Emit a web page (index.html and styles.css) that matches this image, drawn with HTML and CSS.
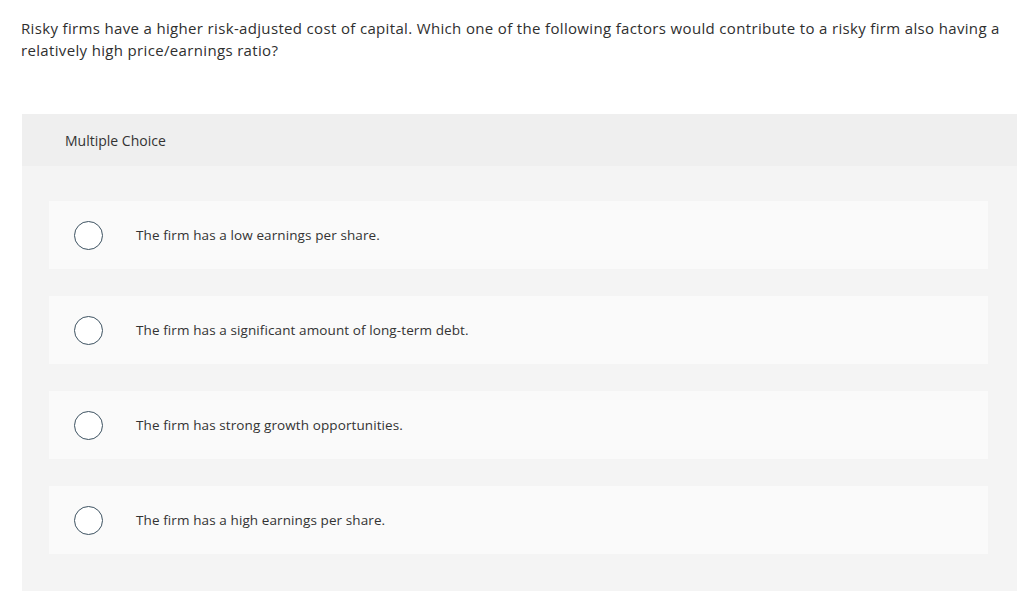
FILE: index.html
```html
<!DOCTYPE html>
<html lang="en">
<head>
<meta charset="utf-8">
<title>Multiple Choice</title>
<link rel="stylesheet" href="styles.css">
</head>
<body>
<div class="page">
  <p class="question">Risky firms have a higher risk-adjusted cost of capital. Which one of the following factors would contribute to a risky firm also having a relatively high price/earnings ratio?</p>
  <section class="panel">
    <div class="panel-head">Multiple Choice</div>
    <div class="panel-body">
      <label class="option"><span class="radio"></span><span class="opt-text">The firm has a low earnings per share.</span></label>
      <label class="option"><span class="radio"></span><span class="opt-text">The firm has a significant amount of long-term debt.</span></label>
      <label class="option"><span class="radio"></span><span class="opt-text">The firm has strong growth opportunities.</span></label>
      <label class="option"><span class="radio"></span><span class="opt-text">The firm has a high earnings per share.</span></label>
    </div>
  </section>
</div>
</body>
</html>
```
FILE: styles.css
```css
html, body {
  margin: 0;
  padding: 0;
  background: #ffffff;
}
body {
  font-family: "Open Sans", Lato, "Liberation Sans", sans-serif;
  color: #333333;
  font-variant-ligatures: none;
}
.page {
  padding: 17px 7px 0 21px;
}
.question {
  margin: 0;
  font-size: 15px;
  letter-spacing: 0.34px;
  line-height: 22px;
  color: #2f2f2f;
}
.panel {
  margin-top: 53px;
  margin-left: 1px;
}
.panel-head {
  height: 52px;
  background: #efefef;
  display: flex;
  align-items: center;
  padding-left: 43px;
  font-size: 14px;
  color: #333;
}
.panel-body {
  background: #f4f4f4;
  padding: 35px 29px 40px 27px;
  display: flex;
  flex-direction: column;
  gap: 27px;
}
.option {
  height: 68px;
  background: #fafafa;
  display: flex;
  align-items: center;
  padding-left: 25px;
}
.radio {
  width: 27px;
  height: 27px;
  border: 1px solid #3d5261;
  border-radius: 50%;
  background: #ffffff;
  flex: none;
}
.opt-text {
  margin-left: 33px;
  font-size: 13.5px;
  letter-spacing: 0.1px;
  color: #333;
}
```
